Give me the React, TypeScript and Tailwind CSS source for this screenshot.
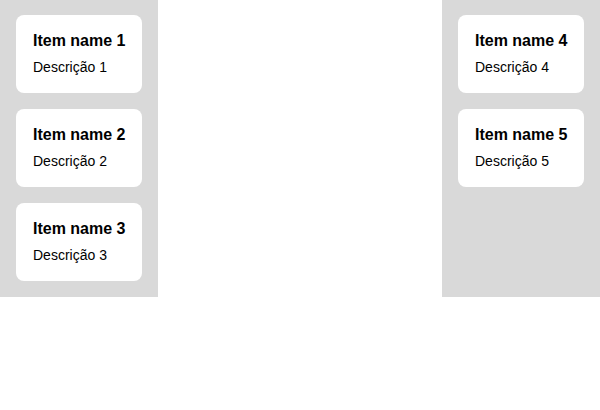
import React from 'react';

interface Item {
  id: number;
  name: string;
  description: string;
}

const leftItems: Item[] = [
  { id: 1, name: 'Item name 1', description: 'Descrição 1' },
  { id: 2, name: 'Item name 2', description: 'Descrição 2' },
  { id: 3, name: 'Item name 3', description: 'Descrição 3' },
];

const rightItems: Item[] = [
  { id: 4, name: 'Item name 4', description: 'Descrição 4' },
  { id: 5, name: 'Item name 5', description: 'Descrição 5' },
];

function ItemCard({ item }: { item: Item }) {
  return (
    <div className="h-[78px] bg-white rounded-lg pl-[17px] pt-[17px] whitespace-nowrap">
      <h3 className="text-base font-bold leading-[18px] text-black">{item.name}</h3>
      <p className="mt-[9px] text-sm leading-4 text-black">{item.description}</p>
    </div>
  );
}

function Column({ items }: { items: Item[] }) {
  return (
    <div className="w-[158px] h-[297px] bg-[#d9d9d9] px-4 pt-[15px] flex flex-col gap-4">
      {items.map((item) => (
        <ItemCard key={item.id} item={item} />
      ))}
    </div>
  );
}

export default function App() {
  return (
    <div
      className="w-[600px] h-[410px] bg-white flex justify-between items-start"
      style={{ fontFamily: '"Liberation Sans", Arial, sans-serif' }}
    >
      <Column items={leftItems} />
      <Column items={rightItems} />
    </div>
  );
}
